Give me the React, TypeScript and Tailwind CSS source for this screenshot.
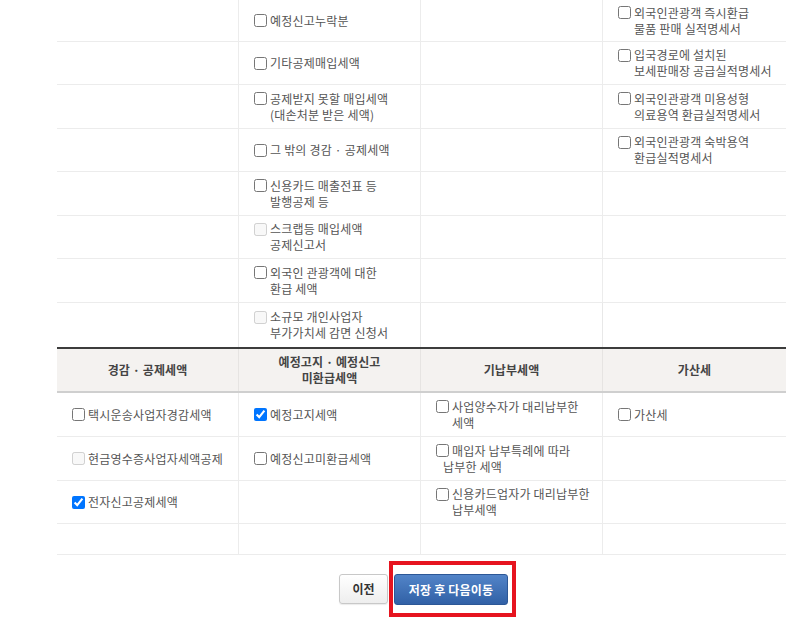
import React from "react";

type Item = { lines: string[]; checked?: boolean; disabled?: boolean; outdent?: boolean } | null;

const font = { fontFamily: '"Noto Sans CJK KR", "Noto Sans", sans-serif' };

function Check({ item }: { item: Item }) {
  if (!item) return null;
  return (
    <label className="flex items-start gap-[3px] text-[12px] leading-[16px] tracking-[0.2px] text-[#555] whitespace-nowrap">
      <input
        type="checkbox"
        defaultChecked={item.checked}
        disabled={item.disabled}
        className="m-0 mt-[1.5px] h-[13px] w-[13px] shrink-0"
      />
      <span className="flex flex-col">
        <span>{item.lines[0]}</span>
        {item.lines[1] && (
          <span className={item.outdent ? "-ml-[9px]" : ""}>{item.lines[1]}</span>
        )}
      </span>
    </label>
  );
}

function Row({ cells, h, last }: { cells: Item[]; h: string; last?: boolean }) {
  return (
    <div className={`grid grid-cols-[182px_182px_182px_183px] ${h}`}>
      {cells.map((c, i) => (
        <div
          key={i}
          className={`flex items-center pl-[15px] ${last ? "" : "border-b border-[#ececec]"} ${
            i < 3 ? "border-r border-[#e8e8e8]" : ""
          }`}
        >
          <Check item={c} />
        </div>
      ))}
    </div>
  );
}

const topRows: { cells: Item[]; h: string }[] = [
  {
    h: "h-[42px]",
    cells: [null, { lines: ["예정신고누락분"] }, null, { lines: ["외국인관광객 즉시환급", "물품 판매 실적명세서"] }],
  },
  {
    h: "h-[43px]",
    cells: [null, { lines: ["기타공제매입세액"] }, null, { lines: ["입국경로에 설치된", "보세판매장 공급실적명세서"] }],
  },
  {
    h: "h-[44px]",
    cells: [
      null,
      { lines: ["공제받지 못할 매입세액", "(대손처분 받은 세액)"] },
      null,
      { lines: ["외국인관광객 미용성형", "의료용역 환급실적명세서"] },
    ],
  },
  {
    h: "h-[43px]",
    cells: [null, { lines: ["그 밖의 경감 · 공제세액"] }, null, { lines: ["외국인관광객 숙박용역", "환급실적명세서"] }],
  },
  { h: "h-[44px]", cells: [null, { lines: ["신용카드 매출전표 등", "발행공제 등"] }, null, null] },
  { h: "h-[43px]", cells: [null, { lines: ["스크랩등 매입세액", "공제신고서"], disabled: true }, null, null] },
  { h: "h-[44px]", cells: [null, { lines: ["외국인 관광객에 대한", "환급 세액"] }, null, null] },
  { h: "h-[44px]", cells: [null, { lines: ["소규모 개인사업자", "부가가치세 감면 신청서"], disabled: true }, null, null] },
];

const bodyRows: { cells: Item[]; h: string }[] = [
  {
    h: "h-[44px]",
    cells: [
      { lines: ["택시운송사업자경감세액"] },
      { lines: ["예정고지세액"], checked: true },
      { lines: ["사업양수자가 대리납부한", "세액"] },
      { lines: ["가산세"] },
    ],
  },
  {
    h: "h-[44px]",
    cells: [
      { lines: ["현금영수증사업자세액공제"], disabled: true },
      { lines: ["예정신고미환급세액"] },
      { lines: ["매입자 납부특례에 따라", "납부한 세액"], outdent: true },
      null,
    ],
  },
  {
    h: "h-[43px]",
    cells: [{ lines: ["전자신고공제세액"], checked: true }, null, { lines: ["신용카드업자가 대리납부한", "납부세액"] }, null],
  },
  { h: "h-[31px]", cells: [null, null, null, null] },
];

const headers = [["경감 · 공제세액"], ["예정고지 · 예정신고", "미환급세액"], ["기납부세액"], ["가산세"]];

export default function App() {
  return (
    <div className="w-[800px] h-[631px] bg-white overflow-hidden" style={font}>
      <div className="pl-[57px] w-[786px]">
        {topRows.map((r, i) => (
          <Row key={i} cells={r.cells} h={r.h} last={i === topRows.length - 1} />
        ))}
        <div className="grid grid-cols-[182px_182px_182px_183px] h-[46px] border-t-[2px] border-t-[#3c3c3c] border-b-[2px] border-b-[#cfcfcf] bg-[#f4f2f0]">
          {headers.map((h, i) => (
            <div
              key={i}
              className={`flex flex-col items-center justify-center text-[12px] leading-[16px] font-bold text-[#444] tracking-[0.1px] ${
                i < 3 ? "border-r border-[#e6e4e2]" : ""
              }`}
            >
              {h.map((l, j) => (
                <span key={j}>{l}</span>
              ))}
            </div>
          ))}
        </div>
        {bodyRows.map((r, i) => (
          <Row key={i} cells={r.cells} h={r.h} />
        ))}
        <div className="flex justify-center gap-[6px] pt-[19px] pl-[4px]">
          <button className="h-[30px] w-[49px] rounded-[3px] border border-[#c8c8c8] bg-gradient-to-b from-white to-[#eeeeee] text-[12px] font-bold text-[#333] shadow-[0_1px_1px_rgba(0,0,0,0.08)]">
            이전
          </button>
          <span className="relative">
            <button className="h-[31px] w-[114px] rounded-[3px] border border-[#2c5796] bg-gradient-to-b from-[#5284c8] to-[#3161a6] text-[12px] font-bold text-white tracking-[0.2px]">
              저장 후 다음이동
            </button>
            <span className="pointer-events-none absolute -left-[5px] -right-[8px] -top-[13px] -bottom-[12px] border-[4px] border-[#e6141f]" />
          </span>
        </div>
      </div>
    </div>
  );
}
